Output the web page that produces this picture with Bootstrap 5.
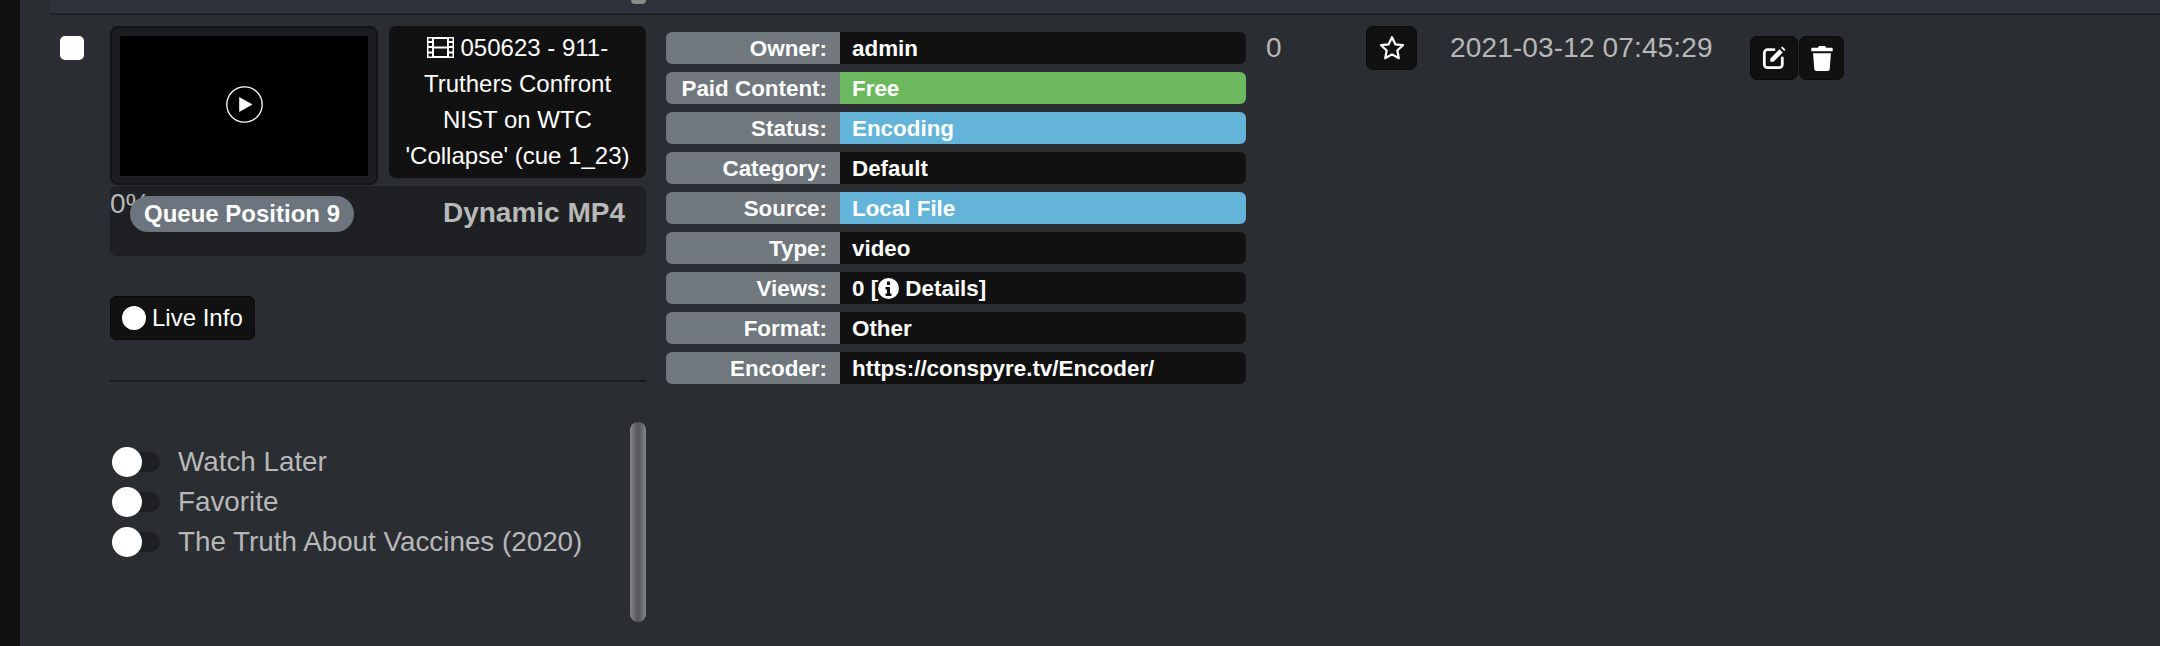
<!DOCTYPE html>
<html lang="en">
<head>
    <meta charset="UTF-8">
    <meta name="viewport" content="width=device-width, initial-scale=1.0">
    <title>Videos</title>
    <link rel="stylesheet" href="https://cdn.jsdelivr.net/npm/bootstrap@5.3.3/dist/css/bootstrap.min.css">
    <script src="https://cdn.jsdelivr.net/npm/bootstrap@5.3.3/dist/js/bootstrap.bundle.min.js"></script>
    <style>
        html, body {
            height: 646px;
            overflow: hidden;
        }
        body {
            background-color: #2a2d32;
            color: #b8b8b8;
            font-family: "Liberation Sans", Arial, sans-serif;
            font-size: 28px;
            line-height: 36px;
        }
        .side-strip {
            width: 20px;
            background-color: #111;
        }
        .main-area {
            padding-left: 30px;
        }
        .prev-row {
            height: 15px;
            background-color: #2f323a;
            border-bottom: 2px solid #1f2226;
            padding-left: 581px;
        }
        .prev-thumb {
            width: 15px;
            height: 4px;
            background-color: #8a8a8a;
            border-radius: 0 0 7px 7px;
        }
        .col-check { width: 60px; padding: 21px 0 0 10px; flex: none; }
        .col-media { width: 556px; padding: 11px 20px 0 0; flex: none; }
        .col-info { width: 600px; padding: 17px 20px 0 0; flex: none; }
        .col-count { width: 100px; padding-top: 15px; flex: none; }
        .col-fav { width: 84px; padding-top: 11px; flex: none; }
        .col-date { width: 300px; padding-top: 15px; flex: none; letter-spacing: .14px; }
        .col-act { padding-top: 21px; }

        .form-check-input.row-check {
            width: 24px;
            height: 24px;
            margin: 0;
            border-radius: 5px;
            background-color: #fff;
            border: 0;
            display: block;
        }
        .video-box {
            width: 268px;
            height: 159px;
            background-color: #1b1d20;
            border: 2px solid #141518;
            border-radius: 8px;
            padding: 8px;
        }
        .video-inner {
            height: 140px;
            padding-bottom: 4px;
            background-color: #000;
        }
        .title-box {
            width: 257px;
            height: 152px;
            margin-left: 11px;
            padding: 4px 0;
            background-color: #111;
            border-radius: 7px;
            color: #fff;
            font-size: 24px;
            text-align: center;
        }
        .title-box svg { vertical-align: -2px; }
        .progress-bar-box {
            height: 70px;
            margin-top: 1px;
            background-color: #1e2023;
            border-radius: 7px;
        }
        .pct-text { font-size: 28px; line-height: 36px; color: #b8b8b8; }
        .queue-pill {
            top: 10px;
            left: 20px;
            height: 36px;
            padding: 0 14px;
            border-radius: 18px;
            background-color: #6c757d;
            color: #fff;
            font-size: 24px;
            font-weight: 700;
            line-height: 36px;
            white-space: nowrap;
        }
        .format-name {
            padding: 12px 21px 0 0;
            font-weight: 700;
            color: #b8b8b8;
            line-height: 30px;
        }
        .live-btn {
            width: 145px;
            height: 44px;
            margin-top: 40px;
            padding: 0 0 0 11px;
            background-color: #111;
            border: 1px solid #0b0b0b;
            border-radius: 6px;
            color: #fff;
            font-size: 24px;
            line-height: 1;
        }
        .live-dot {
            width: 24px;
            height: 24px;
            margin-right: 6px;
            border-radius: 50%;
            background-color: #fff;
        }
        .split-line {
            height: 2px;
            margin-top: 40px;
            background-color: #1a1c1f;
        }
        .lists-box { height: 200px; margin-top: 40px; }
        .tgl-list { padding-top: 20px; font-size: 27.8px; }
        .tgl-row { height: 40px; }
        .tgl-track {
            width: 48px;
            height: 20px;
            margin: 0 18px 0 2px;
            border-radius: 10px;
            background-color: #1e2023;
        }
        .tgl-knob {
            top: -5px;
            left: 0;
            width: 30px;
            height: 30px;
            border-radius: 50%;
            background-color: #fff;
        }
        .scroll-thumb {
            width: 16px;
            height: 200px;
            border-radius: 8px;
            background: linear-gradient(90deg, #85878a, #55575b 45%, #55575b 55%, #85878a);
        }
        .info-row {
            height: 32px;
            margin-bottom: 8px;
            border-radius: 6px;
            overflow: hidden;
            color: #fff;
            font-size: 22.4px;
            font-weight: 700;
            line-height: 33px;
        }
        .info-label {
            width: 174px;
            padding-right: 13px;
            background-color: #70787e;
            text-align: right;
            flex: none;
        }
        .info-val {
            padding-left: 12px;
            background-color: #111;
        }
        .info-val.val-green { background-color: #6cb85f; }
        .info-val.val-blue { background-color: #63b4d8; }
        .info-val svg { vertical-align: -3px; }
        .icon-btn {
            height: 44px;
            padding: 0;
            background-color: #111;
            border: 1px solid #0b0b0b;
            border-radius: 7px;
        }
        .fav-btn { width: 51px; }
        .edit-btn { width: 48px; }
        .trash-btn { width: 45px; margin-left: 1px; }
    </style>
</head>
<body>
    <div class="d-flex h-100">
        <div class="side-strip"></div>
        <div class="main-area flex-grow-1">
            <!-- end of the row above -->
            <div class="prev-row"><div class="prev-thumb"></div></div>

            <div class="d-flex">
                <div class="col-check">
                    <input class="form-check-input row-check" type="checkbox">
                </div>

                <div class="col-media">
                    <div class="d-flex align-items-start">
                        <div class="video-box">
                            <div class="video-inner d-flex align-items-center justify-content-center">
                                <svg width="37" height="37" viewBox="0 0 37 37">
                                    <circle cx="18.5" cy="18.5" r="17.7" fill="none" stroke="#fff" stroke-width="1.3"/>
                                    <path d="M13.500 11.500 26 18.500 13.500 25.500Z" fill="#fff" stroke="#fff" stroke-width=".6" stroke-linejoin="round"/>
                                </svg>
                            </div>
                        </div>
                        <div class="title-box">
                            <svg width="27" height="21" viewBox="0 0 27 21">
                                <path fill="#fff" fill-rule="evenodd" d="M0 0H27V21H0ZM1.5 1.5V4H5V1.5ZM1.5 6V9H5V6ZM1.5 11V14.5H5V11ZM1.5 16.5V19.5H5V16.5ZM22 1.5V4H25.5V1.5ZM22 6V9H25.5V6ZM22 11V14.5H25.5V11ZM22 16.5V19.5H25.5V16.5ZM7 2V9.5H20V2ZM7 11.5V19H20V11.5Z"/>
                            </svg>
                            050623 - 911-<br>Truthers Confront<br>NIST on WTC<br>'Collapse' (cue 1_23)
                        </div>
                    </div>

                    <div class="progress-bar-box position-relative d-flex justify-content-between">
                        <span class="pct-text">0%</span>
                        <span class="queue-pill position-absolute">Queue Position 9</span>
                        <span class="format-name">Dynamic MP4</span>
                    </div>

                    <button type="button" class="btn live-btn d-flex align-items-center">
                        <span class="live-dot"></span> Live Info
                    </button>

                    <div class="split-line"></div>

                    <div class="lists-box d-flex justify-content-between">
                        <div class="tgl-list">
                            <div class="tgl-row d-flex align-items-center">
                                <span class="tgl-track position-relative"><span class="tgl-knob position-absolute"></span></span>
                                Watch Later
                            </div>
                            <div class="tgl-row d-flex align-items-center">
                                <span class="tgl-track position-relative"><span class="tgl-knob position-absolute"></span></span>
                                Favorite
                            </div>
                            <div class="tgl-row d-flex align-items-center">
                                <span class="tgl-track position-relative"><span class="tgl-knob position-absolute"></span></span>
                                The Truth About Vaccines (2020)
                            </div>
                        </div>
                        <div class="scroll-thumb"></div>
                    </div>
                </div>

                <div class="col-info">
                    <div class="info-row d-flex"><div class="info-label">Owner:</div><div class="info-val flex-grow-1">admin</div></div>
                    <div class="info-row d-flex"><div class="info-label">Paid Content:</div><div class="info-val val-green flex-grow-1">Free</div></div>
                    <div class="info-row d-flex"><div class="info-label">Status:</div><div class="info-val val-blue flex-grow-1">Encoding</div></div>
                    <div class="info-row d-flex"><div class="info-label">Category:</div><div class="info-val flex-grow-1">Default</div></div>
                    <div class="info-row d-flex"><div class="info-label">Source:</div><div class="info-val val-blue flex-grow-1">Local File</div></div>
                    <div class="info-row d-flex"><div class="info-label">Type:</div><div class="info-val flex-grow-1">video</div></div>
                    <div class="info-row d-flex">
                        <div class="info-label">Views:</div>
                        <div class="info-val flex-grow-1">0 [<svg width="21" height="21" viewBox="0 0 21 21"><path fill="#fff" fill-rule="evenodd" d="M10.5 0a10.5 10.5 0 1 0 0 21 10.5 10.5 0 0 0 0-21ZM9 3.5h3V7H9ZM7.5 9H12v6.5h1.5V18h-6v-2.500H9V11.500H7.500Z"/></svg> Details]</div>
                    </div>
                    <div class="info-row d-flex"><div class="info-label">Format:</div><div class="info-val flex-grow-1">Other</div></div>
                    <div class="info-row d-flex"><div class="info-label">Encoder:</div><div class="info-val flex-grow-1">https://conspyre.tv/Encoder/</div></div>
                </div>

                <div class="col-count">0</div>

                <div class="col-fav">
                    <button type="button" class="btn icon-btn fav-btn">
                        <svg width="26" height="26" viewBox="0 0 26 26"><path fill="none" stroke="#fff" stroke-width="2.200" stroke-linejoin="round" d="M13 2.200 16.300 9.300 24 10.200 18.300 15.500 19.800 23.200 13 19.400 6.200 23.200 7.700 15.500 2 10.200 9.700 9.300Z"/></svg>
                    </button>
                </div>

                <div class="col-date">2021-03-12 07:45:29</div>

                <div class="col-act d-flex align-items-start">
                    <button type="button" class="btn icon-btn edit-btn">
                        <svg width="24" height="24" viewBox="0 0 26 26">
                            <path fill="none" stroke="#fff" stroke-width="3" stroke-linecap="round" d="M13 4H6A3.500 3.500 0 0 0 2.500 7.500V20A3.500 3.500 0 0 0 6 23.500H18.500A3.500 3.500 0 0 0 22 20V13"/>
                            <path fill="#fff" d="M9 13.500 19 3.500 22.500 7 12.500 17H9ZM20.500 2 22 .5 25.500 4 24 5.500Z"/>
                        </svg>
                    </button>
                    <button type="button" class="btn icon-btn trash-btn">
                        <svg width="22" height="25" viewBox="0 0 24 28">
                            <path fill="#fff" d="M8.500 0H15.500L16.500 2H23A1 1 0 0 1 24 3V5A1 1 0 0 1 23 6H1A1 1 0 0 1 0 5V3A1 1 0 0 1 1 2H7.500ZM2 8H22L20.700 25.500A2.500 2.500 0 0 1 18.200 28H5.800A2.500 2.500 0 0 1 3.300 25.500Z"/>
                        </svg>
                    </button>
                </div>
            </div>
        </div>
    </div>
</body>
</html>
